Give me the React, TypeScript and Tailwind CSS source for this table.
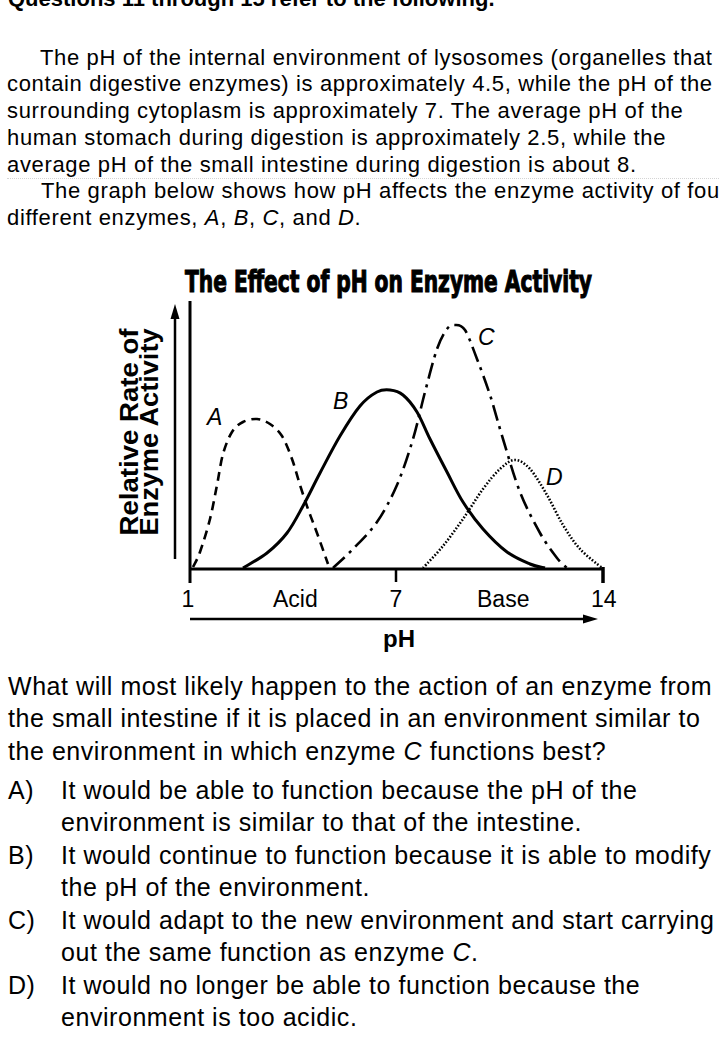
import React from "react";

type Pt = [number, number];

// page coordinates of points along each curve (read off the figure)
const curveA: Pt[] = [[193, 575], [200, 560], [210, 527], [217, 493], [223, 462], [232, 440], [243, 430], [257, 427], [270, 432], [282, 444], [292, 467], [300, 493], [308, 517], [317, 541], [328, 572]];
const curveB: Pt[] = [[243, 576], [267, 561], [287, 541], [303, 514], [320, 481], [340, 444], [360, 414], [377, 400], [390, 398], [403, 403], [417, 420], [430, 447], [447, 480], [463, 510], [483, 537], [507, 560], [530, 572], [545, 576]];
const curveC: Pt[] = [[333, 576], [353, 557], [377, 530], [397, 493], [413, 447], [425, 400], [437, 357], [447, 337], [455, 333], [465, 338], [477, 367], [490, 403], [503, 447], [520, 500], [540, 541], [557, 566], [567, 576]];
const curveD: Pt[] = [[423, 576], [443, 554], [463, 527], [483, 497], [500, 477], [515, 468], [530, 477], [547, 503], [563, 533], [580, 557], [602, 576]];

function smooth(p: Pt[]) {
    let d = `M${p[0][0]},${p[0][1]}`;
    for (let i = 0; i < p.length - 1; i++) {
        const p0 = p[i - 1] || p[i];
        const p1 = p[i];
        const p2 = p[i + 1];
        const p3 = p[i + 2] || p2;
        const c1x = p1[0] + (p2[0] - p0[0]) / 6;
        const c1y = p1[1] + (p2[1] - p0[1]) / 6;
        const c2x = p2[0] - (p3[0] - p1[0]) / 6;
        const c2y = p2[1] - (p3[1] - p1[1]) / 6;
        d += ` C${c1x},${c1y} ${c2x},${c2y} ${p2[0]},${p2[1]}`;
    }
    return d;
}

function Chart() {
    const sans = "'Liberation Sans', Arial, sans-serif";
    return (
        <svg className="block" width="719" height="438" viewBox="0 240 719 438">
            {/* title */}
            <text
                x="185"
                y="300"
                textLength="407"
                lengthAdjust="spacingAndGlyphs"
                fontFamily="'DejaVu Sans Condensed', 'Liberation Sans Narrow', sans-serif"
                fontWeight="700"
                fontSize="30"
                stroke="#000"
                strokeWidth="1.1"
            >
                The Effect of pH on Enzyme Activity
            </text>

            {/* y label */}
            <g fontFamily={sans} fontWeight="700" fontSize="25" textAnchor="middle">
                <text transform="rotate(-90)" x="-440" y="138" textLength="207" lengthAdjust="spacingAndGlyphs">Relative Rate of</text>
                <text transform="rotate(-90)" x="-440" y="158" textLength="207" lengthAdjust="spacingAndGlyphs">Enzyme Activity</text>
            </g>

            {/* y arrow */}
            <line x1="175" y1="567" x2="175" y2="322" stroke="#000" strokeWidth="2.5" />
            <polygon points="175,312 170.5,327 179.5,327" fill="#000" />

            {/* axes */}
            <line x1="190" y1="309" x2="190" y2="591" stroke="#000" strokeWidth="3" />
            <line x1="189" y1="577" x2="604" y2="577" stroke="#000" strokeWidth="3" />
            <line x1="396" y1="577" x2="396" y2="590" stroke="#000" strokeWidth="2.5" />
            <line x1="603" y1="575" x2="603" y2="591" stroke="#000" strokeWidth="3.5" />

            {/* curves */}
            <path d={smooth(curveA)} fill="none" stroke="#000" strokeWidth="2.6" strokeDasharray="9 6" />
            <path d={smooth(curveB)} fill="none" stroke="#000" strokeWidth="3" />
            <path d={smooth(curveC)} fill="none" stroke="#000" strokeWidth="2.6" strokeDasharray="16 6 3 6" />
            <path d={smooth(curveD)} fill="none" stroke="#000" strokeWidth="2.6" strokeDasharray="1.6 1.8" />

            {/* curve labels */}
            <g fontFamily={sans} fontStyle="italic" fontSize="23">
                <text x="207" y="433">A</text>
                <text x="333" y="417">B</text>
                <text x="478" y="353">C</text>
                <text x="546" y="493">D</text>
            </g>

            {/* x axis labels */}
            <g fontFamily={sans} fontSize="23">
                <text x="188" y="615" textAnchor="middle">1</text>
                <text x="273" y="615">Acid</text>
                <text x="396" y="615" textAnchor="middle">7</text>
                <text x="477" y="615">Base</text>
                <text x="591" y="615">14</text>
            </g>

            {/* pH arrow */}
            <line x1="190" y1="627" x2="588" y2="627" stroke="#000" strokeWidth="2.5" />
            <polygon points="598,627 583,622.5 583,631.5" fill="#000" />
            <text x="399" y="655" textAnchor="middle" fontFamily={sans} fontWeight="700" fontSize="24">pH</text>
        </svg>
    );
}

const options = [
    { key: "A)", lines: [<>It would be able to function because the pH of the</>, <>environment is similar to that of the intestine.</>] },
    { key: "B)", lines: [<>It would continue to function because it is able to modify</>, <>the pH of the environment.</>] },
    { key: "C)", lines: [<>It would adapt to the new environment and start carrying</>, <>out the same function as enzyme <i>C</i>.</>] },
    { key: "D)", lines: [<>It would no longer be able to function because the</>, <>environment is too acidic.</>] },
];

export default function App() {
    return (
        <div className="w-[719px] h-[1064px] overflow-hidden bg-white text-black font-['Liberation_Sans',Arial,sans-serif]">
            <div className="-mt-[14px] pl-[8px] text-[22px] leading-[26.7px] font-bold whitespace-nowrap">
                Questions 11 through 15 refer to the following.
            </div>

            <div className="mt-[32px] pl-[7px] text-[22px] leading-[26.7px] tracking-[0.65px] whitespace-nowrap">
                <div className="pl-[33px]">The pH of the internal environment of lysosomes (organelles that</div>
                <div>contain digestive enzymes) is approximately 4.5, while the pH of the</div>
                <div>surrounding cytoplasm is approximately 7. The average pH of the</div>
                <div>human stomach during digestion is approximately 2.5, while the</div>
                <div className="-mb-px border-b border-dotted border-[#d4d4d4]">average pH of the small intestine during digestion is about 8.</div>
                <div className="pl-[34px]">The graph below shows how pH affects the enzyme activity of four</div>
                <div>different enzymes, <i>A</i>, <i>B</i>, <i>C</i>, and <i>D</i>.</div>
            </div>

            <Chart />

            <div className="pl-[8px] text-[25px] leading-[32.5px] tracking-[0.55px] whitespace-nowrap">
                <div>What will most likely happen to the action of an enzyme from</div>
                <div>the small intestine if it is placed in an environment similar to</div>
                <div>the environment in which enzyme <i>C</i> functions best?</div>

                <div className="mt-[6.5px]">
                    {options.map((o) => (
                        <div key={o.key} className="flex">
                            <div className="w-[53px] shrink-0">{o.key}</div>
                            <div>
                                {o.lines.map((l, i) => (
                                    <div key={i}>{l}</div>
                                ))}
                            </div>
                        </div>
                    ))}
                </div>
            </div>
        </div>
    );
}
